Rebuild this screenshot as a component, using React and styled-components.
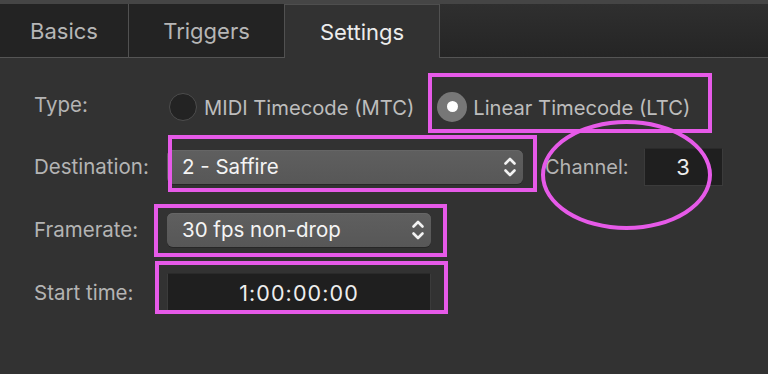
import React from 'react';
import styled, { createGlobalStyle } from 'styled-components';

const GlobalStyle = createGlobalStyle`
    html, body {
        margin: 0;
        padding: 0;
        background: #323232;
    }
    body {
        font-family: 'Inter', 'Liberation Sans', sans-serif;
    }
`;

const Page = styled.div`
    position: relative;
    width: 768px;
    height: 374px;
    overflow: hidden;
    background: #323232;
`;

const TabBar = styled.div`
    display: flex;
    height: 54px;
    border-top: 4px solid #454545;
`;

const Tab = styled.div`
    width: ${(p) => p.width}px;
    flex: none;
    display: flex;
    align-items: center;
    justify-content: center;
    box-sizing: border-box;
    font-size: 22px;
    color: ${(p) => (p.active ? '#ececec' : '#b6b6b6')};
    background: ${(p) => (p.active ? '#323232' : '#232323')};
    border-right: 1.5px solid #515151;
    border-top: ${(p) => (p.active ? '1px solid #4e4e4e' : 'none')};
    border-bottom: ${(p) => (p.active ? 'none' : '1.5px solid #555555')};
`;

const TabFill = styled.div`
    flex: 1;
    background: linear-gradient(#2f2f2f, #252525);
    border-bottom: 1.5px solid #555555;
`;

const Form = styled.div`
    display: grid;
    grid-template-columns: 133px auto;
    grid-auto-rows: 63px;
    align-items: center;
    padding: 14px 0 0 34px;
`;

const Label = styled.div`
    font-size: 20.5px;
    color: #b4b4b4;
    margin-top: ${(p) => p.shift || 0}px;
`;

const Line = styled.div`
    display: flex;
    align-items: center;
    margin-top: ${(p) => p.shift || 0}px;
`;

const Radio = styled.span`
    width: ${(p) => (p.checked ? 30 : 28)}px;
    height: ${(p) => (p.checked ? 30 : 28)}px;
    box-sizing: border-box;
    border-radius: 50%;
    flex: none;
    display: flex;
    align-items: center;
    justify-content: center;
    margin-left: ${(p) => p.ml || 0}px;
    background: ${(p) => (p.checked ? '#777777' : '#232323')};
    border: ${(p) => (p.checked ? 'none' : '1.5px solid #4d4d4d')};

    &::after {
        content: '';
        display: ${(p) => (p.checked ? 'block' : 'none')};
        width: 11px;
        height: 11px;
        border-radius: 50%;
        background: #ffffff;
    }
`;

const RadioText = styled.span`
    font-size: 20.2px;
    color: #bdbdbd;
    margin-left: ${(p) => p.ml || 7}px;
    margin-top: 2px;
`;

const Select = styled.div`
    width: ${(p) => p.width}px;
    height: 34px;
    box-sizing: border-box;
    display: flex;
    align-items: center;
    justify-content: space-between;
    padding: 0 6px 0 15px;
    border-radius: 6px;
    background: linear-gradient(#5f5f5f, #575757);
    box-shadow: 0 1px 0 #262626, inset 0 1px 0 #666666;
    color: #f4f4f4;
    font-size: 20.5px;
`;

const Chevrons = () => (
    <svg width="14" height="24" viewBox="0 0 14 24" fill="none" stroke="#f2f2f2" strokeWidth="2.6" strokeLinecap="round" strokeLinejoin="round">
        <path d="M2.5 8.5 L7 4 L11.5 8.5" />
        <path d="M2.5 15.5 L7 20 L11.5 15.5" />
    </svg>
);

const ChannelLabel = styled.span`
    font-size: 20px;
    color: #b4b4b4;
    margin: 0 15px 0 22px;
`;

const Field = styled.div`
    width: ${(p) => p.width}px;
    height: ${(p) => p.height}px;
    box-sizing: border-box;
    display: flex;
    align-items: center;
    justify-content: center;
    background: #1f1f1f;
    border: 1px solid #3b3b3b;
    border-top-color: #2a2a2a;
    color: #ededed;
    font-size: ${(p) => p.size}px;
    letter-spacing: ${(p) => p.spacing || 0}px;
`;

// magenta annotation marks drawn over the screenshot
const Mark = styled.div`
    position: absolute;
    left: ${(p) => p.x}px;
    top: ${(p) => p.y}px;
    width: ${(p) => p.w}px;
    height: ${(p) => p.h}px;
    box-sizing: border-box;
    border: 4px solid #e65ae8;
    border-radius: ${(p) => (p.round ? '50%' : '0')};
    pointer-events: none;
`;

export default function App() {
    return (
        <Page>
            <GlobalStyle />
            <TabBar>
                <Tab width={129}>Basics</Tab>
                <Tab width={156}>Triggers</Tab>
                <Tab width={155} active>Settings</Tab>
                <TabFill />
            </TabBar>
            <Form>
                <Label shift={2}>Type:</Label>
                <Line shift={6}>
                    <Radio ml={2} />
                    <RadioText>MIDI Timecode (MTC)</RadioText>
                    <Radio checked ml={23} />
                    <RadioText ml={6}>Linear Timecode (LTC)</RadioText>
                </Line>

                <Label>Destination:</Label>
                <Line>
                    <Select width={356}>
                        2 - Saffire
                        <Chevrons />
                    </Select>
                    <ChannelLabel>Channel:</ChannelLabel>
                    <Field width={79} height={38} size={22}>3</Field>
                </Line>

                <Label>Framerate:</Label>
                <Line>
                    <Select width={264}>
                        30 fps non-drop
                        <Chevrons />
                    </Select>
                </Line>

                <Label>Start time:</Label>
                <Line>
                    <Field width={264} height={40} size={21.5} spacing={1.1}>1:00:00:00</Field>
                </Line>
            </Form>

            <Mark x={428} y={73} w={284} h={60} />
            <Mark x={168} y={135} w={369} h={57} />
            <Mark x={154} y={204} w={293} h={53} />
            <Mark x={155} y={261} w={293} h={53} />
            <Mark x={541} y={120} w={171} h={110} round />
        </Page>
    );
}
